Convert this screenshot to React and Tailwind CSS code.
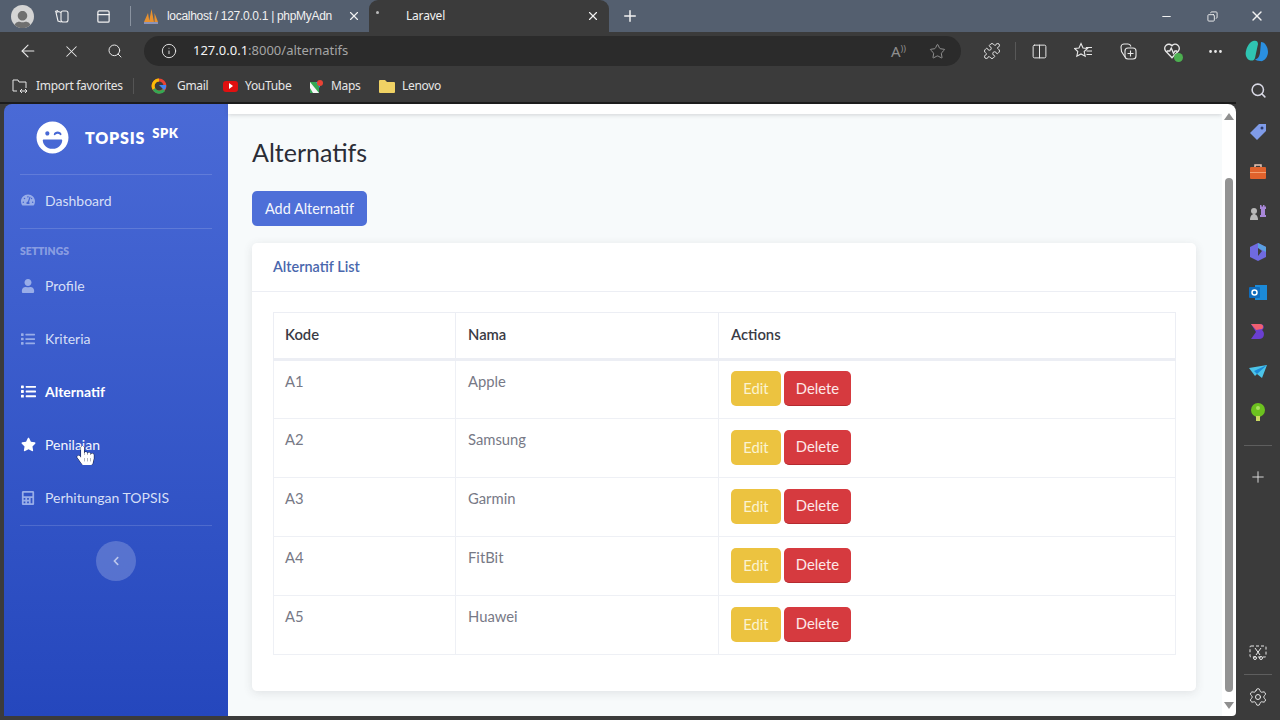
import { ArrowLeft, X, Search, Info, Star, Plus, Minus, MoreHorizontal, Puzzle, Columns2, Copy, PanelTop, Settings } from 'lucide-react';
import { FaLaughWink, FaTachometerAlt, FaUser, FaList, FaStar, FaCalculator, FaChevronLeft, FaHandPointer } from 'react-icons/fa';

const rows = [
    ['A1', 'Apple'],
    ['A2', 'Samsung'],
    ['A3', 'Garmin'],
    ['A4', 'FitBit'],
    ['A5', 'Huawei'],
];

function TabBar() {
    return (
        <div className="h-8 bg-[#545f6f] flex items-center text-[#f1f1f1] text-[12.5px] font-['Noto_Sans',sans-serif] shrink-0">
            <div className="ml-[11px] w-[23px] h-[23px] rounded-full bg-[#d4d4d4] flex items-end justify-center overflow-hidden shrink-0">
                <FaUser size={19} className="text-[#6f6f6f] -mb-[2px]" />
            </div>
            <svg width="17" height="17" viewBox="0 0 17 17" fill="none" stroke="#f1f1f1" strokeWidth="1.1" className="ml-[19px] shrink-0">
                <rect x="8" y="3" width="7" height="11" rx="2" />
                <path d="M8 4.5 5.5 3.5 3 4.5 5 13l3 1M5 2.5 2 3.5" />
            </svg>
            <PanelTop size={15} className="ml-[26px] shrink-0" />
            <div className="ml-[19px] w-px h-5 bg-[#8a93a0] shrink-0" />
            <div className="ml-[12px] w-[218px] h-8 flex items-center shrink-0">
                <svg width="16" height="16" viewBox="0 0 16 16" className="shrink-0">
                    <path d="M1 14 5 5l1.5 9zM6 14 8.5 1 11 14zM11.5 14 11.5 5l3.5 9z" fill="#e8912e" />
                    <path d="M1 14h14v2H1z" fill="#8b93b8" />
                </svg>
                <span className="ml-[8px] w-[173px] whitespace-nowrap font-['Liberation_Sans',sans-serif] text-[12px] tracking-[-0.3px]">localhost / 127.0.0.1 | phpMyAdn</span>
                <X size={14} className="ml-[7px] shrink-0" />
            </div>
            <div className="ml-[8px] w-[240px] h-8 bg-[#3b3b3b] rounded-t-[9px] flex items-center shrink-0">
                <span className="ml-[7px] w-[3px] h-[3px] rounded-full bg-[#bbbbbb] -mt-[8px]" />
                <span className="ml-[27px] text-[12px] tracking-[-0.2px]">Laravel</span>
                <X size={14} className="ml-auto mr-[9px]" />
            </div>
            <Plus size={18} className="ml-[12px] shrink-0" />
            <div className="ml-auto flex items-center">
                <Minus size={13} />
                <Copy size={11} className="ml-[34px] -scale-x-100" />
                <X size={16} className="ml-[31px] mr-[15px]" />
            </div>
        </div>
    );
}

function Toolbar() {
    return (
        <div className="h-[38px] bg-[#3b3b3b] flex items-center text-[#e8e8e8] shrink-0">
            <ArrowLeft size={20} strokeWidth={1.3} className="ml-[18px] shrink-0" />
            <X size={19} strokeWidth={1.3} className="ml-[24px] shrink-0" />
            <Search size={16} strokeWidth={1.5} className="ml-[26px] shrink-0" />
            <div className="ml-[21px] w-[817px] h-[30px] rounded-full bg-[#2b2b2b] flex items-center shrink-0">
                <Info size={16} strokeWidth={1.4} className="ml-[17px] shrink-0" />
                <span className="ml-[16px] text-[13px] font-['Noto_Sans',sans-serif] text-[#f4f4f4]">
                    127.0.0.1<span className="text-[#a5a5a5]">:8000/alternatifs</span>
                </span>
                <span className="ml-auto -translate-x-[2px] text-[#8f8f8f] text-[15px] leading-none font-['Noto_Sans',sans-serif]">A<span className="text-[9px] align-top">))</span></span>
                <Star size={17} strokeWidth={1.2} className="ml-[21px] mr-[15px] text-[#a0a0a0]" />
            </div>
            <Puzzle size={18} strokeWidth={1.3} className="ml-[22px] shrink-0" />
            <div className="ml-[14px] w-px h-[18px] bg-[#585858] shrink-0" />
            <Columns2 size={17} strokeWidth={1.4} className="ml-[15px] shrink-0" />
            <svg width="19" height="18" viewBox="0 0 19 18" fill="none" stroke="#e8e8e8" strokeWidth="1.1" className="ml-[26px] shrink-0">
                <path d="M7 1.5 9 6l4.5.5-3.3 3 1 4.8L7 12l-4.2 2.3 1-4.8L.6 6.500 5 6zM12 5.500h6M12.500 9h5.500M12.500 12.500h5.500" />
            </svg>
            <svg width="18" height="18" viewBox="0 0 18 18" fill="none" stroke="#e8e8e8" strokeWidth="1.1" className="ml-[26px] shrink-0">
                <path d="M6 15 2.500 9.500 2 5c0-1.500 1.500-3 3-3h4c1.500 0 2.500 1 3 2.500" />
                <rect x="6" y="6" width="11" height="11" rx="3" />
                <path d="M11.500 8.500v6M8.500 11.500h6" />
            </svg>
            <div className="relative ml-[26px] shrink-0">
                <svg width="18" height="18" viewBox="0 0 24 24" fill="none" stroke="#e8e8e8" strokeWidth="1.8">
                    <path d="M12 21 3.500 12a5.500 5.500 0 0 1 8.500-7 5.500 5.500 0 0 1 8.500 7zM5 12h4l2-4 3 7 2-3h3" />
                </svg>
                <span className="absolute -right-[2px] -bottom-[2px] w-[9px] h-[9px] rounded-full bg-[#4caf50]" />
            </div>
            <MoreHorizontal size={17} className="ml-[26px] shrink-0" />
            <svg width="26" height="26" viewBox="0 0 26 26" className="ml-[20px] shrink-0">
                <path d="M9 3c3-1 5 0 5 3l-3 14c-1 3-3 3-6 2-3-2-4-6-3-9 1-5 4-9 7-10z" fill="#2fc4b2" />
                <path d="M17 4c4 0 7 5 7 10s-4 10-8 9c-3 0-4-1-5-2 3 0 4-2 5-6l1-11z" fill="#2a8fe0" />
            </svg>
        </div>
    );
}

function Bookmarks() {
    return (
        <div className="h-[32px] bg-[#3b3b3b] flex items-center text-[#e6e6e6] text-[12px] tracking-[-0.3px] font-['Noto_Sans',sans-serif]">
            <svg width="16" height="16" viewBox="0 0 16 16" fill="none" stroke="#e6e6e6" className="ml-[12px] shrink-0">
                <path d="M1 13V2h5l1 2h7v6M1 13h4M8 13h7M10 11l-2 2 2 2M13 11l2 2-2 2" />
            </svg>
            <span className="ml-[8px] w-[85px] shrink-0 whitespace-nowrap">Import favorites</span>
            <div className="ml-[12px] w-px h-4 bg-[#555555] shrink-0" />
            <svg width="16" height="16" viewBox="0 0 16 16" className="ml-[17px] shrink-0">
                <circle cx="8" cy="8" r="6" fill="none" stroke="#ea4335" strokeWidth="3" />
                <path d="M8 2a6 6 0 0 0-5 9" fill="none" stroke="#fbbc05" strokeWidth="3" />
                <path d="M3 11a6 6 0 0 0 10 1" fill="none" stroke="#34a853" strokeWidth="3" />
                <path d="M8 7h7v2a6 6 0 0 1-2 3" fill="#4285f4" />
            </svg>
            <span className="ml-[10px] w-[29px] shrink-0">Gmail</span>
            <div className="ml-[17px] w-[15px] h-[11px] rounded-[3px] bg-[#e01010] flex items-center justify-center shrink-0">
                <span className="w-0 h-0 border-y-[3px] border-y-transparent border-l-[4px] border-l-white" />
            </div>
            <span className="ml-[7px] w-[48px] shrink-0">YouTube</span>
            <svg width="15" height="15" viewBox="0 0 15 15" className="ml-[16px] shrink-0">
                <path d="M1 3h9v11H1z" fill="#34a853" />
                <path d="M1 3l9 11H4L1 9z" fill="#f5f5f5" />
                <path d="M7 3h4v6z" fill="#4285f4" />
                <circle cx="11" cy="4" r="3" fill="#ea4335" />
            </svg>
            <span className="ml-[7px] w-[30px] shrink-0">Maps</span>
            <svg width="16" height="14" viewBox="0 0 16 14" className="ml-[18px] shrink-0">
                <path d="M0 2a1 1 0 0 1 1-1h5l2 2h7a1 1 0 0 1 1 1v9a1 1 0 0 1-1 1H1a1 1 0 0 1-1-1z" fill="#f0d264" />
            </svg>
            <span className="ml-[7px]">Lenovo</span>
        </div>
    );
}

function NavItem({ icon: Icon, label, active, bright, className }) {
    return (
        <div className={`h-[53px] flex items-center pl-[17px] ${className || ''}`}>
            <span className="w-[24px] flex justify-start shrink-0">
                <Icon size={active || bright ? 15 : 14} className={active || bright ? 'text-white' : 'text-[#98ade8]'} />
            </span>
            <span className={`text-[14px] ${active ? 'font-bold text-white' : bright ? 'text-[#f4f6fd]' : 'text-[#d6dff6]'}`}>{label}</span>
        </div>
    );
}

function Sidebar() {
    return (
        <aside className="w-[224px] shrink-0 bg-gradient-to-b from-[#4a6ad6] to-[#2547bd] rounded-tl-[8px] flex flex-col">
            <div className="h-[70px] flex items-center pl-[32px] pb-[3px] text-white shrink-0">
                <FaLaughWink size={33} />
                <span className="ml-[16px] text-[16px] font-extrabold tracking-[0.8px] mt-[1px]">TOPSIS</span>
                <span className="ml-[7px] text-[13px] font-extrabold tracking-[0.6px] -mt-[8px]">SPK</span>
            </div>
            <div className="mx-[16px] h-px bg-white/15" />
            <NavItem icon={FaTachometerAlt} label="Dashboard" className="pb-[3px]" />
            <div className="mx-[16px] h-px bg-white/15" />
            <div className="h-[30px] pt-[15px] pl-[16px] text-[10.4px] leading-[14px] font-extrabold text-white/40">SETTINGS</div>
            <NavItem icon={FaUser} label="Profile" />
            <NavItem icon={FaList} label="Kriteria" />
            <NavItem icon={FaList} label="Alternatif" active />
            <NavItem icon={FaStar} label="Penilaian" bright />
            <NavItem icon={FaCalculator} label="Perhitungan TOPSIS" />
            <div className="mt-[1px] mx-[16px] h-px bg-white/15" />
            <div className="mt-[15px] mx-auto w-10 h-10 rounded-full bg-white/20 flex items-center justify-center text-white/60">
                <FaChevronLeft size={10} />
            </div>
        </aside>
    );
}

function AlternatifTable() {
    return (
        <table className="w-[903px] border-collapse table-fixed text-[14.8px]">
            <thead>
                <tr className="h-[47px] text-[#3a3b45]">
                    <th className="w-[182px] border border-[#eceef4] border-b-[3px] pl-[11px] pr-3 pb-[3px] text-left font-semibold">Kode</th>
                    <th className="w-[263px] border border-[#eceef4] border-b-[3px] px-3 pb-[3px] text-left font-semibold">Nama</th>
                    <th className="border border-[#eceef4] border-b-[3px] px-3 pb-[3px] text-left font-semibold">Actions</th>
                </tr>
            </thead>
            <tbody className="text-[#777986]">
                {rows.map(([kode, nama]) => (
                    <tr key={kode} className="h-[59px]">
                        <td className="border border-[#eef0f5] pl-[11px] pr-3 pt-[9px] align-top">{kode}</td>
                        <td className="border border-[#eef0f5] px-3 pt-[9px] align-top">{nama}</td>
                        <td className="border border-[#eef0f5] px-3 pb-[2px] align-middle">
                            <div className="flex gap-[3px]">
                                <button className="w-[50px] h-[35px] rounded-[5px] bg-[#ecc340] text-[#fbf3d0]">Edit</button>
                                <button className="w-[67px] h-[35px] rounded-[5px] bg-[#d63a3f] text-[#fde8e8] border-b border-[#b52a2f]">Delete</button>
                            </div>
                        </td>
                    </tr>
                ))}
            </tbody>
        </table>
    );
}

function Scrollbar() {
    return (
        <div className="w-[14px] shrink-0 bg-white flex flex-col items-center rounded-tr-[8px] rounded-br-[4px] pb-[2px]">
            <span className="mt-[9px] w-0 h-0 border-x-[5px] border-x-transparent border-b-[7px] border-b-[#8f8f8f]" />
            <div className="mt-[58px] w-[8px] h-[514px] rounded-full bg-[#939393]" />
            <span className="mt-auto mb-[5px] w-0 h-0 border-x-[5px] border-x-transparent border-t-[7px] border-t-[#8f8f8f]" />
        </div>
    );
}

function SideRail() {
    return (
        <div className="w-[44px] shrink-0 flex flex-col items-center pt-[12px] text-[#e8e8e8]">
            <Search size={17} strokeWidth={2.2} className="text-[#d8d8e4]" />
            <svg width="20" height="20" viewBox="0 0 20 20" className="mt-[23px]"><path d="M2 11 11 2h7v7l-9 9z" fill="#7f9be8" /><circle cx="14" cy="6" r="1.500" fill="#2c3c70" /></svg>
            <svg width="20" height="20" viewBox="0 0 20 20" className="mt-[20px]"><path d="M7 5V3h6v2" fill="none" stroke="#e8c4b4" strokeWidth="1.500" /><rect x="2" y="5" width="16" height="12" rx="1" fill="#e0622c" /><rect x="2" y="10" width="16" height="1" fill="#f4a070" /></svg>
            <svg width="20" height="20" viewBox="0 0 20 20" className="mt-[20px]"><path d="M12 3h1.500v1.500H15V3h1.500v1.500H18V7h-1v6h1v2h-6v-2h1V7h-1z" fill="#a887d8" /><circle cx="6" cy="9" r="3" fill="#b8b8b8" /><path d="M2 18c0-4 2-6 4-6s4 2 4 6z" fill="#b8b8b8" /></svg>
            <svg width="20" height="20" viewBox="0 0 20 20" className="mt-[20px]"><path d="M10 1 18 5v10l-8 4-8-4V5z" fill="#6f6ae0" /><path d="M10 1 18 5v5l-8-4z" fill="#5aa0e0" /><path d="M10 6l4 3-4 5z" fill="#3d3d3d" /></svg>
            <svg width="20" height="20" viewBox="0 0 20 20" className="mt-[20px]"><rect x="7" y="3" width="12" height="15" fill="#1b8ad8" /><rect x="1" y="5" width="11" height="11" rx="1" fill="#0f6cbd" /><circle cx="6.500" cy="10.500" r="2.500" fill="none" stroke="#fff" strokeWidth="1.500" /></svg>
            <svg width="20" height="20" viewBox="0 0 20 20" className="mt-[20px]"><path d="M3 2h9c4 0 5 4 2 6 3 2 3 9-3 9H3l5-7z" fill="#6a3fd0" /><path d="M3 2h9c3 0 4 3 2 5L8 8z" fill="#f05f70" /></svg>
            <svg width="20" height="20" viewBox="0 0 20 20" className="mt-[20px]"><path d="M1 6 19 3 14 16 9 12 7 14z" fill="#4cc4e8" /><path d="M6 9 19 3 9 12z" fill="#1b8ad8" /></svg>
            <svg width="20" height="20" viewBox="0 0 20 20" className="mt-[20px]"><circle cx="10" cy="8" r="7" fill="#6cc11f" /><circle cx="10" cy="6" r="2" fill="#a8e060" /><rect x="8" y="14" width="4" height="5" fill="#c9d860" /></svg>
            <div className="mt-[23px] w-[28px] h-px bg-[#5e5e5e]" />
            <Plus size={18} strokeWidth={1.2} className="mt-[22px]" />
            <svg width="18" height="16" viewBox="0 0 18 16" fill="none" stroke="#e8e8e8" className="mt-auto">
                <rect x="1" y="1" width="16" height="11" rx="1" strokeDasharray="3 2" />
                <path d="M6 3l5 7M12 3l-5 7" />
                <circle cx="6" cy="13" r="1.500" />
                <circle cx="12" cy="13" r="1.500" />
            </svg>
            <div className="mt-[13px] w-[28px] h-px bg-[#5e5e5e]" />
            <Settings size={20} strokeWidth={1.2} className="mt-[12px] mb-[13px]" />
        </div>
    );
}

export default function App() {
    return (
        <div className="relative h-screen w-full overflow-hidden flex flex-col bg-[#3b3b3b] font-['Lato',sans-serif]">
            <TabBar />
            <Toolbar />
            <div className="flex-1 flex min-h-0">
                <div className="flex-1 min-w-0 flex flex-col">
                    <Bookmarks />
                    <div className="h-[2px] bg-[#1c1c1c]" />
                    <div className="flex-1 min-h-0 flex ml-[4px] mb-[4px]">
                        <Sidebar />
                        <main className="flex-1 min-w-0 bg-[#f7fafb] flex flex-col">
                            <div className="h-[10px] bg-white shadow-[0_1px_4px_rgba(58,59,69,0.2)]" />
                            <div className="pl-[24px] pr-[26px]">
                                <h1 className="mt-[20px] h-[36px] text-[25px] leading-[36px] text-[#2b2d36]">Alternatifs</h1>
                                <button className="mt-[21px] block w-[115px] h-[35px] rounded-[5px] bg-[#4e6fd8] text-[14.4px] text-[#f4f6fd]">Add Alternatif</button>
                                <section className="mt-[17px] h-[448px] bg-white rounded-[5px] shadow-[0_2px_10px_rgba(58,59,69,0.12)]">
                                    <div className="h-[49px] border-b border-[#eceef4] pl-[21px] flex items-center text-[14.4px] font-semibold text-[#4a67ad]">Alternatif List</div>
                                    <div className="pt-[20px] pl-[21px]">
                                        <AlternatifTable />
                                    </div>
                                </section>
                            </div>
                        </main>
                        <Scrollbar />
                    </div>
                </div>
                <SideRail />
            </div>
            <FaHandPointer size={19} className="absolute left-[76px] top-[446px] text-white stroke-black stroke-[20px] [paint-order:stroke]" />
        </div>
    );
}
